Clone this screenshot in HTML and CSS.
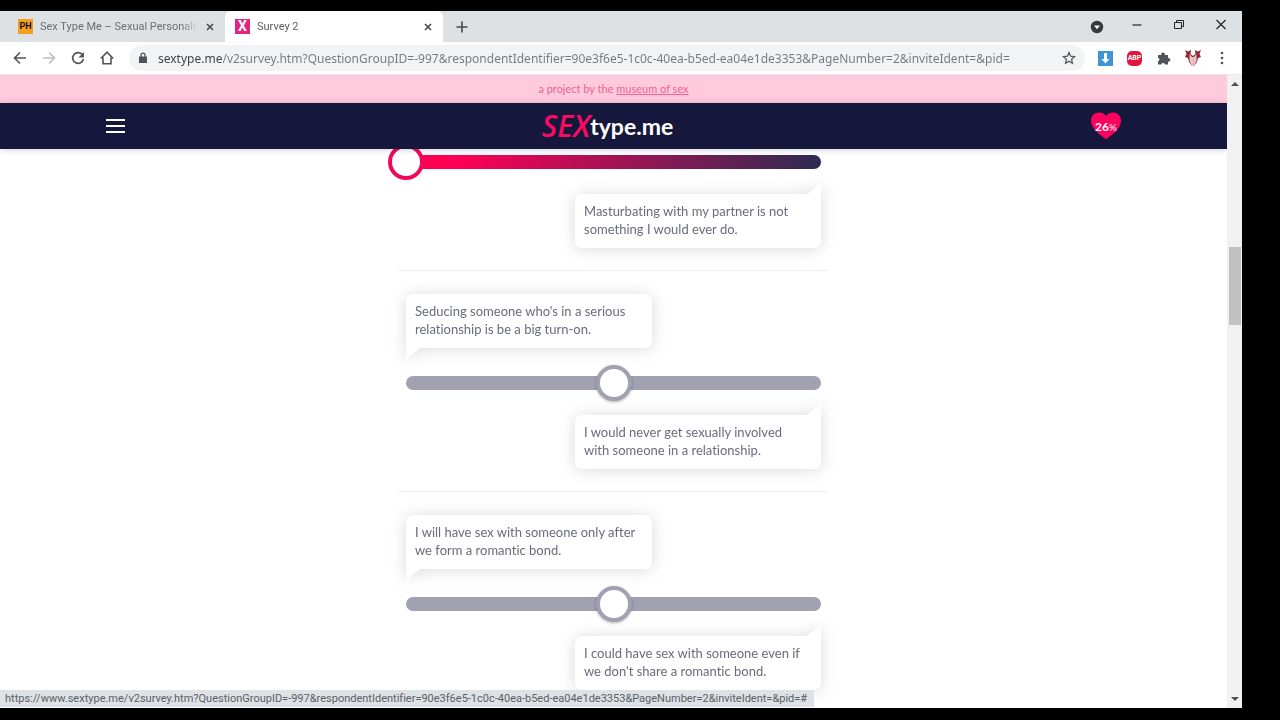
FILE: index.html
```html
<!DOCTYPE html>
<html lang="en">
<head>
    <meta charset="UTF-8">
    <meta name="viewport" content="width=device-width, initial-scale=1.0">
    <title>Survey 2</title>
    <link rel="stylesheet" href="styles.css">
</head>
<body>
    <div class="window">
        <div class="tab-strip">
            <div class="tab">
                <span class="favicon favicon-ph">PH</span>
                <span class="tab-title">Sex Type Me – Sexual Personality</span>
                <button class="tab-close" aria-label="Close tab">
                    <svg width="8" height="8" viewBox="0 0 8 8"><path d="M1 1l6 6M7 1l-6 6" stroke="#45494d" stroke-width="1.6"/></svg>
                </button>
            </div>
            <div class="tab active">
                <span class="favicon favicon-x">X</span>
                <span class="tab-title">Survey 2</span>
                <button class="tab-close" aria-label="Close tab">
                    <svg width="8" height="8" viewBox="0 0 8 8"><path d="M1 1l6 6M7 1l-6 6" stroke="#45494d" stroke-width="1.6"/></svg>
                </button>
            </div>
            <button class="new-tab" aria-label="New tab">
                <svg width="12" height="12" viewBox="0 0 12 12"><path d="M6 .5v11M.5 6h11" stroke="#45494d" stroke-width="1.6"/></svg>
            </button>
            <div class="window-controls">
                <button aria-label="Search tabs">
                    <svg width="14" height="14" viewBox="0 0 14 14"><circle cx="7" cy="7" r="6.2" fill="#35383c"/><path d="M4 5.500h6L7 9.200z" fill="#fff"/></svg>
                </button>
                <button aria-label="Minimize">
                    <svg width="12" height="12" viewBox="0 0 12 12"><path d="M1.500 6h9" stroke="#222" stroke-width="1.2"/></svg>
                </button>
                <button aria-label="Restore">
                    <svg width="12" height="12" viewBox="0 0 12 12" fill="none" stroke="#222"><path d="M1.500 3.500h7v6h-7zM3.500 3.500V1.500h7v6h-2"/></svg>
                </button>
                <button aria-label="Close">
                    <svg width="12" height="12" viewBox="0 0 12 12"><path d="M1.500 1l9 9M10.500 1l-9 9" stroke="#222" stroke-width="1.2"/></svg>
                </button>
            </div>
        </div>

        <div class="toolbar">
            <button class="tool" aria-label="Back">
                <svg width="14" height="14" viewBox="0 0 14 14" fill="none" stroke="#505357" stroke-width="1.6"><path d="M13 7H2M7 1.500L1.500 7 7 12.500"/></svg>
            </button>
            <button class="tool" aria-label="Forward">
                <svg width="14" height="14" viewBox="0 0 14 14" fill="none" stroke="#bcbec1" stroke-width="1.6"><path d="M1 7h11M7 1.500L12.500 7 7 12.500"/></svg>
            </button>
            <button class="tool" aria-label="Reload">
                <svg width="14" height="14" viewBox="0 0 14 14"><path d="M11.500 3.800A5.400 5.400 0 1 0 12.400 8" fill="none" stroke="#505357" stroke-width="1.7"/><path d="M13 1v5.500H7.500z" fill="#505357"/></svg>
            </button>
            <button class="tool" aria-label="Home">
                <svg width="14" height="14" viewBox="0 0 14 14" fill="none" stroke="#505357" stroke-width="1.6"><path d="M.8 7.500L7 1.200l6.200 6.300M3 6.500v6.200h8V6.500"/></svg>
            </button>
            <div class="omnibox">
                <svg width="10" height="12" viewBox="0 0 10 12"><path d="M1 4.500h8v6.500H1z" fill="#505357"/><path d="M3 5V3.200a2 2 0 0 1 4 0V5" fill="none" stroke="#505357" stroke-width="1.3"/></svg>
                <input class="url" type="text" aria-label="Address" value="sextype.me/v2survey.htm?QuestionGroupID=-997&amp;respondentIdentifier=90e3f6e5-1c0c-40ea-b5ed-ea04e1de3353&amp;PageNumber=2&amp;inviteIdent=&amp;pid=">
                <button class="star" aria-label="Bookmark">
                    <svg width="14" height="14" viewBox="0 0 14 14" fill="none" stroke="#505357" stroke-width="1.2"><path d="M7 1.500l1.600 3.700 4 .4-3 2.700.9 4L7 10.200l-3.500 2.100.9-4-3-2.700 4-.4z"/></svg>
                </button>
            </div>
            <button class="tool" aria-label="Downloader">
                <svg width="15" height="15" viewBox="0 0 15 15"><path d="M0 0h15v15H0z" fill="#3d95d3"/><path d="M6 2h3v6h2.500l-4 4.500-4-4.500H6z" fill="#fff"/></svg>
            </button>
            <button class="tool" aria-label="Adblock">
                <span class="abp">ABP</span>
            </button>
            <button class="tool" aria-label="Extensions">
                <svg width="14" height="14" viewBox="0 0 14 14" fill="#505357"><path d="M1 4h3.200a1.900 1.900 0 1 1 3.600 0H11v3.200a1.800 1.800 0 1 1 0 3.400V13.500H7.900a1.800 1.800 0 0 0-3.500 0H1V10.300a1.800 1.800 0 0 0 0-3.500z"/></svg>
            </button>
            <button class="tool" aria-label="Profile">
                <svg width="16" height="18" viewBox="0 0 16 18"><path d="M0 1l3 1.500L6 1 5.500 5 8 7l2.500-2L10 1l3 1.500L16 1l-1.500 4L16 8l-3 1-1 4-3 4H7l-3-4-1-4-3-1 1.500-3z" fill="#8f2a33"/><path d="M4.500 5L7 8v9l-2.500-5zM11.500 5L9 8v9l2.500-5z" fill="#eec4c2"/><path d="M7.300 8h1.400v10H7.300z" fill="#fff"/></svg>
            </button>
            <button class="tool" aria-label="Menu">
                <svg width="4" height="14" viewBox="0 0 4 14" fill="#505357"><circle cx="2" cy="2" r="1.300"/><circle cx="2" cy="7" r="1.300"/><circle cx="2" cy="12" r="1.300"/></svg>
            </button>
        </div>

        <div class="viewport">
            <div class="page">
                <div class="banner">a project by the <a href="#">museum of sex</a></div>
                <header class="navbar">
                    <button class="hamburger" aria-label="Open menu"><span></span><span></span><span></span></button>
                    <a class="logo" href="#"><span class="logo-sex">SEX</span>type.me</a>
                    <div class="progress">
                        <svg width="32" height="28" viewBox="0 0 32 28"><path d="M16 27.500C11 23 1 17.500 1 8.500 1 3.500 4.500.5 9 .5c3 0 5.500 1 7 3.500C17.500 1.500 20 .5 23 .5c4.500 0 8 3 8 8 0 9-10 14.500-15 19z" fill="#ff005c"/></svg>
                        <span class="progress-text">26<small>%</small></span>
                    </div>
                </header>

                <form class="survey">
                    <div class="question">
                        <div class="slider answered"><input type="range" id="q1" min="0" max="100" value="0"></div>
                        <label class="bubble right" for="q1">Masturbating with my partner is not something I would ever do.</label>
                    </div>
                    <div class="question">
                        <label class="bubble left" for="q2">Seducing someone who's in a serious relationship is be a big turn-on.</label>
                        <div class="slider"><input type="range" id="q2" min="0" max="100" value="50"></div>
                        <label class="bubble right" for="q2">I would never get sexually involved with someone in a relationship.</label>
                    </div>
                    <div class="question">
                        <label class="bubble left" for="q3">I will have sex with someone only after we form a romantic bond.</label>
                        <div class="slider"><input type="range" id="q3" min="0" max="100" value="50"></div>
                        <label class="bubble right" for="q3">I could have sex with someone even if we don't share a romantic bond.</label>
                    </div>
                </form>
            </div>

            <div class="scrollbar">
                <span class="arrow up"></span>
                <div class="thumb"></div>
                <span class="arrow down"></span>
            </div>

            <div class="status">https://www.sextype.me/v2survey.htm?QuestionGroupID=-997&amp;respondentIdentifier=90e3f6e5-1c0c-40ea-b5ed-ea04e1de3353&amp;PageNumber=2&amp;inviteIdent=&amp;pid=#</div>
        </div>
    </div>
</body>
</html>
```
FILE: styles.css
```css
* {
    margin: 0;
    padding: 0;
    box-sizing: border-box;
}

body {
    background: #000;
    height: 100vh;
    padding: 11px 38px 12px 0;
    font-family: 'Lato', sans-serif;
    font-variant-ligatures: none;
    overflow: hidden;
}

button {
    background: none;
    border: none;
    display: flex;
    align-items: center;
    justify-content: center;
    cursor: pointer;
}

.window {
    height: 100%;
    display: flex;
    flex-direction: column;
    background: #fff;
}

/* Tabs */
.tab-strip {
    display: flex;
    height: 31px;
    background: #dee1e4;
    font-family: 'Roboto', sans-serif;
}

.tab {
    width: 218px;
    display: flex;
    align-items: center;
    padding: 0 10px;
    gap: 7px;
    color: #6b6f74;
    font-size: 11px;
}

.tab:first-child {
    width: 225px;
    padding-left: 18px;
}

.tab.active {
    background: #fff;
    border-radius: 6px 6px 0 0;
    color: #5a5e62;
}

.favicon {
    flex: none;
    width: 15px;
    height: 15px;
    line-height: 15px;
    text-align: center;
    font-weight: bold;
}

.favicon-ph {
    background: #f5a01c;
    color: #1a1206;
    font-size: 9px;
}

.favicon-x {
    background: #e5247f;
    color: #fff;
    font-size: 14px;
}

.tab-title {
    flex: 1;
    white-space: nowrap;
    overflow: hidden;
    -webkit-mask-image: linear-gradient(90deg, #000 90%, transparent);
}

.tab-close {
    width: 10px;
    height: 14px;
}

.new-tab {
    width: 38px;
}

.window-controls {
    display: flex;
    margin-left: auto;
}

.window-controls button {
    width: 42px;
    padding-bottom: 4px;
}

.window-controls button:first-child {
    width: 38px;
    padding-bottom: 0;
}

/* Toolbar */
.toolbar {
    display: flex;
    align-items: center;
    height: 33px;
    padding: 0 6px 0 5px;
    border-bottom: 1px solid #e6e8ea;
}

.tool {
    width: 29px;
    height: 29px;
}

.omnibox {
    flex: 1;
    display: flex;
    align-items: center;
    height: 26px;
    margin: 0 6px 0 8px;
    padding: 0 8px 0 9px;
    border-radius: 13px;
    background: #f1f3f4;
}

.url {
    flex: 1;
    min-width: 0;
    margin-left: 10px;
    border: none;
    outline: none;
    background: linear-gradient(90deg, #3c3f43 64px, #75797d 64px);
    -webkit-background-clip: text;
    -webkit-text-fill-color: transparent;
    font-family: 'Noto Sans', sans-serif;
    font-size: 12px;
}

.star {
    width: 16px;
}

.abp {
    width: 15px;
    height: 15px;
    line-height: 15px;
    border-radius: 5px;
    background: #e0183d;
    color: #fff;
    font-family: 'Roboto', sans-serif;
    font-size: 7px;
    font-weight: bold;
}

/* Page area */
.viewport {
    flex: 1;
    min-height: 0;
    display: flex;
    position: relative;
}

.page {
    flex: 1;
    overflow: hidden;
}

.banner {
    height: 28px;
    line-height: 28px;
    background: #ffcadb;
    color: #ef6294;
    font-size: 11px;
    text-align: center;
}

.banner a {
    color: inherit;
}

.navbar {
    position: relative;
    z-index: 1;
    height: 46px;
    padding: 0 105px 0 106px;
    display: flex;
    align-items: center;
    justify-content: space-between;
    background: #16173d;
    box-shadow: 0 1px 6px rgba(22, 23, 61, 0.2);
}

.hamburger {
    width: 19px;
    height: 14px;
    flex-direction: column;
    align-items: stretch;
    justify-content: space-between;
}

.hamburger span {
    height: 2px;
    background: #fff;
}

.logo {
    display: flex;
    align-items: center;
    color: #fff;
    font-size: 23px;
    font-weight: bold;
    line-height: 44px;
    text-decoration: none;
}

.logo-sex {
    color: #f80b61;
    font-family: 'Open Sans', sans-serif;
    font-size: 30px;
    font-style: italic;
    font-weight: 600;
}

.progress {
    display: grid;
    place-items: center;
}

.progress svg,
.progress-text {
    grid-area: 1 / 1;
}

.progress-text {
    color: #fff;
    font-size: 12px;
    font-weight: bold;
}

.progress-text small {
    font-size: 10px;
    color: #e8c4da;
}

/* Survey */
.survey {
    width: 431px;
    max-width: 100%;
    margin: -5px auto 0;
}

.question {
    display: flex;
    flex-direction: column;
    padding: 23px 8px 22px;
    border-bottom: 1px solid #f0f0f2;
}

.question:first-child {
    padding-top: 0;
}

.bubble {
    position: relative;
    width: 246px;
    padding: 8px 16px 10px 9px;
    border-radius: 7px;
    background: #fff;
    color: #6a6b7c;
    font-size: 13px;
    line-height: 18px;
    filter: drop-shadow(0 1px 8px rgba(0, 0, 0, 0.15));
}

.bubble.left {
    align-self: flex-start;
    border-bottom-left-radius: 0;
}

.bubble.right {
    align-self: flex-end;
    border-top-right-radius: 0;
}

.bubble::after {
    content: '';
    position: absolute;
    width: 14px;
    height: 11px;
    background: #fff;
}

.bubble.left::after {
    left: 0;
    top: 100%;
    clip-path: polygon(0 0, 100% 0, 0 100%);
}

.bubble.right::after {
    right: 0;
    bottom: 100%;
    clip-path: polygon(100% 0, 100% 100%, 0 100%);
}

/* The knob is centred on the ends of the track, so the input overhangs it */
.slider {
    position: relative;
    height: 14px;
    margin: 28px 0 25px;
    border-radius: 7px;
    background: #a2a1b2;
}

.slider.answered {
    margin-top: 11px;
    background: linear-gradient(90deg, #ff0055 12%, #2d2b52);
}

.slider input {
    -webkit-appearance: none;
    appearance: none;
    display: block;
    width: calc(100% + 36px);
    height: 36px;
    margin: -11px -18px;
    background: transparent;
}

.slider input::-webkit-slider-thumb {
    -webkit-appearance: none;
    width: 36px;
    height: 36px;
    border: 4px solid #a2a1b2;
    border-radius: 50%;
    background: #fff;
    box-shadow: 0 1px 3px rgba(0, 0, 0, 0.3);
}

.slider.answered input::-webkit-slider-thumb {
    border-color: #f0085a;
    box-shadow: none;
}

/* Scrollbar */
.scrollbar {
    width: 15px;
    display: flex;
    flex-direction: column;
    align-items: center;
    padding: 7px 0;
    background: #f1f1f1;
}

.thumb {
    width: 12px;
    height: 78px;
    margin-top: 161px;
    background: #c1c1c1;
}

.arrow {
    border: 4px solid transparent;
}

.arrow.up {
    border-top: none;
    border-bottom-color: #505050;
}

.arrow.down {
    margin-top: auto;
    border-bottom: none;
    border-top-color: #505050;
}

.status {
    position: absolute;
    left: 0;
    bottom: 1px;
    height: 17px;
    line-height: 17px;
    padding: 0 7px 0 5px;
    background: #dee1e6;
    color: #5c6064;
    font-family: 'Roboto', sans-serif;
    font-size: 11px;
    white-space: nowrap;
}
```
